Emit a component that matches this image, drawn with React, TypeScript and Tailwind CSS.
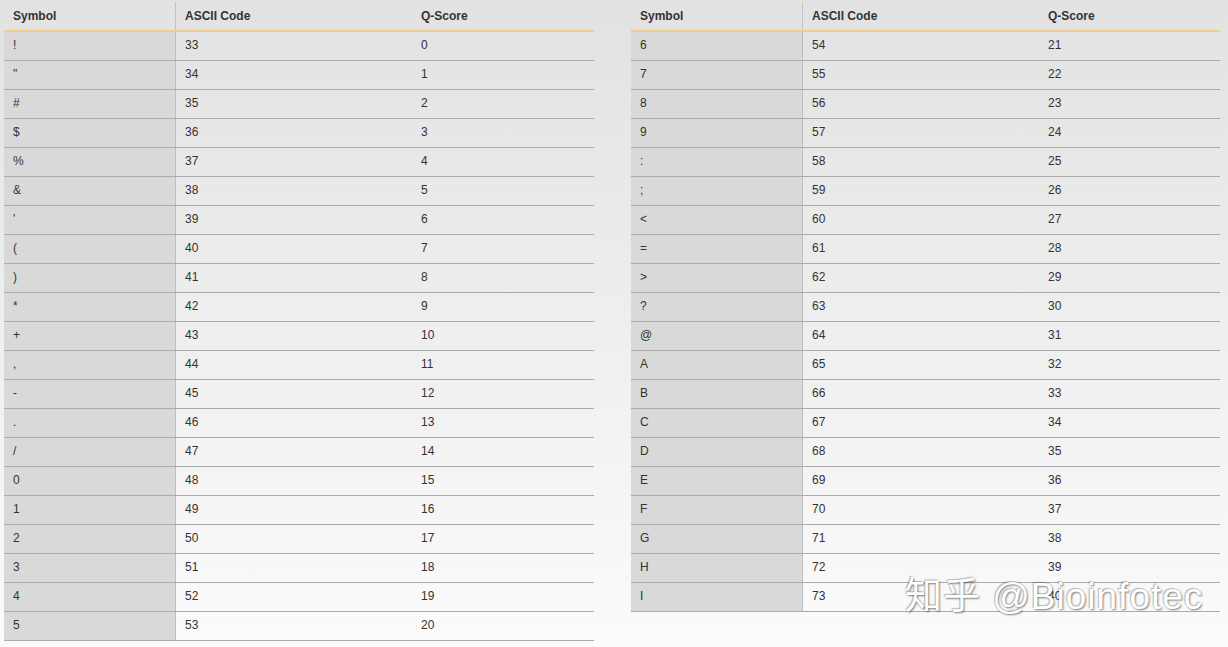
import React from 'react';

type Row = [string, number, number];

const chars = '!"#$%&\'()*+,-./0123456789:;<=>?@ABCDEFGHI';
const allRows: Row[] = chars.split('').map((c, i) => [c, 33 + i, i]);
const leftRows = allRows.slice(0, 21);
const rightRows = allRows.slice(21);

const Table: React.FC<{ rows: Row[]; width: string }> = ({ rows, width }) => (
  <div className={`${width} flex flex-col`}>
    {/* header */}
    <div className="flex h-[30px] border-b-2 border-[#f2cd92] font-bold">
      <div className="w-[172px] border-r border-[#c4c4c4] pl-[9px] pb-[1px] flex items-center">Symbol</div>
      <div className="w-[235px] pl-[9px] pb-[1px] flex items-center">ASCII Code</div>
      <div className="flex-1 pl-[10px] pb-[1px] flex items-center">Q-Score</div>
    </div>
    {rows.map(([sym, code, q]) => (
      <div key={code} className="flex h-[29px] border-b border-[#ababab]">
        <div className="w-[172px] bg-[#d9d9d9] border-r border-[#bdbdbd] pl-[9px] pb-[2px] flex items-center">{sym}</div>
        <div className="w-[235px] pl-[9px] pb-[2px] flex items-center">{code}</div>
        <div className="flex-1 pl-[10px] pb-[2px] flex items-center">{q}</div>
      </div>
    ))}
  </div>
);

export default function App() {
  return (
    <div
      className="relative w-[1228px] h-[647px] overflow-hidden bg-gradient-to-b from-[#e2e2e2] to-[#fbfbfb] text-[12px] text-[#333333]"
      style={{ fontFamily: '"Liberation Sans", Arial, sans-serif' }}
    >
      <div className="flex gap-[37px] pl-[4px] pt-[2px]">
        <Table rows={leftRows} width="w-[590px]" />
        <Table rows={rightRows} width="w-[589px]" />
      </div>

      {/* watermark */}
      <div
        className="absolute left-[905px] top-[575px] text-[37px] leading-[44px] tracking-[1px] text-white"
        style={{
          fontFamily: '"Liberation Sans", "Noto Sans CJK SC", sans-serif',
          textShadow: '1px 1px 2px rgba(0,0,0,0.5), -1px -1px 1px rgba(0,0,0,0.25)',
        }}
      >
        知乎 @Bioinfotec
      </div>
    </div>
  );
}
